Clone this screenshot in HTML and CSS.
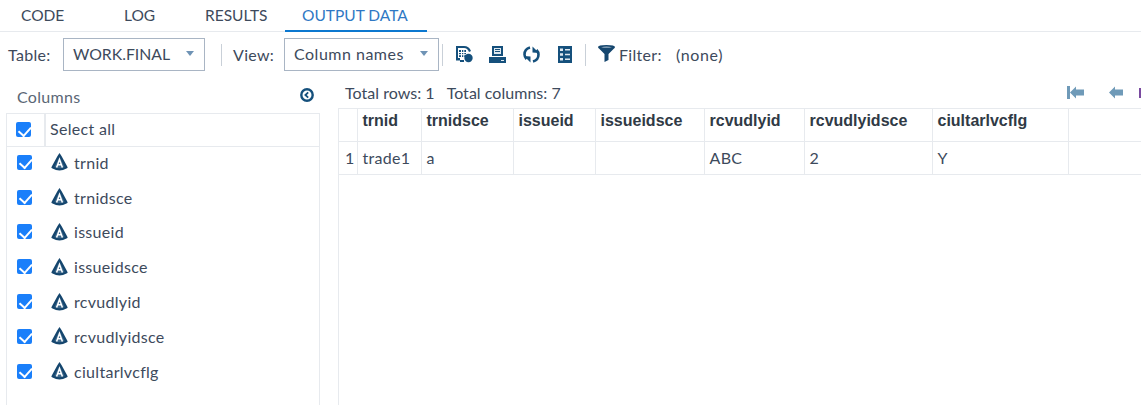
FILE: index.html
```html
<!DOCTYPE html>
<html lang="en">
<head>
<meta charset="utf-8">
<title>Output Data</title>
<link rel="stylesheet" href="styles.css">
</head>
<body>
<svg class="defs" width="0" height="0" aria-hidden="true">
  <symbol id="type-char" viewBox="0 0 17 18">
    <path fill="#15466e" d="M8.5 0 L10.5 3 L16.5 14 Q17 15 15.5 15.6 Q8.5 19.4 1.5 15.6 Q0 15 0.5 14 L6.5 3 Z"/>
    <path fill="#5f87a6" d="M8.5 4 L13.6 14 Q8.5 16.6 3.4 14 Z" opacity=".55"/>
    <path fill="none" stroke="#fff" stroke-width="1.5" d="M5.6 14.4 L8.5 6.4 L11.4 14.4 M6.6 11.8 H10.4"/>
  </symbol>
</svg>

<nav class="tabs">
  <span class="tab tab-code">CODE</span>
  <span class="tab tab-log">LOG</span>
  <span class="tab tab-results">RESULTS</span>
  <span class="tab tab-output">OUTPUT DATA</span>
</nav>

<div class="toolbar">
  <span class="lbl lbl-table">Table:</span>
  <div class="select select-table"><span>WORK.FINAL</span><i class="caret"></i></div>
  <i class="vsep sep-a"></i>
  <span class="lbl lbl-view">View:</span>
  <div class="select select-view"><span>Column names</span><i class="caret"></i></div>
  <i class="vsep sep-b"></i>
  <svg class="tool tool-a" width="18" height="17" viewBox="0 0 18 17">
    <path fill="#15507c" d="M1 0 H9 Q14 0 16 5 L14 6 Q12.5 2 9 2 H3 V12 H5 V14.5 H1 Z"/>
    <path fill="#15507c" d="M4 4 H11 V11 H4 Z"/>
    <path stroke="#fff" stroke-width="1" d="M4 6.5 H11 M4 8.7 H11 M6.5 4 V11 M8.8 4 V11"/>
    <circle fill="#15507c" cx="13.5" cy="12" r="4.2"/>
    <path fill="#15507c" d="M5 14 H9 V16 H5 Z"/>
  </svg>
  <svg class="tool tool-b" width="17" height="17" viewBox="0 0 17 17">
    <path fill="#15507c" d="M3 0 H14 V10 H3 Z"/>
    <path fill="#dfe8ef" d="M5 2 H12 V8 H5 Z"/>
    <path fill="#15507c" d="M6 3 H11 V4 H6 Z M6 5 H11 V6 H6 Z"/>
    <path fill="#15507c" d="M0 11 H17 V17 H0 Z"/>
    <path fill="#dfe8ef" d="M12 14 H15 V15 H12 Z"/>
  </svg>
  <svg class="tool tool-c" width="17" height="17" viewBox="0 0 17 17">
    <path fill="none" stroke="#15507c" stroke-width="2.6" d="M7 1.5 Q1.5 3 1.5 8.5 Q1.5 11 3.5 13"/>
    <path fill="#15507c" d="M1 10 L7.5 10.5 L7.5 16.5 Z"/>
    <path fill="none" stroke="#15507c" stroke-width="2.6" d="M10 15.5 Q15.5 14 15.5 8.5 Q15.5 6 13.5 4"/>
    <path fill="#15507c" d="M16 7 L9.5 6.5 L9.5 0.5 Z"/>
  </svg>
  <svg class="tool tool-d" width="14" height="17" viewBox="0 0 14 17">
    <path fill="#15507c" d="M0 0 H14 V17 H0 Z"/>
    <path fill="#dfe8ef" d="M2 2.5 H5 V5 H2 Z M2 7.3 H5 V9.8 H2 Z M2 12 H5 V14.5 H2 Z M7 3 H12 V4.5 H7 Z M7 7.8 H12 V9.3 H7 Z M7 12.5 H12 V14 H7 Z"/>
  </svg>
  <i class="vsep sep-c"></i>
  <svg class="tool tool-f" width="17" height="17" viewBox="0 0 17 17">
    <path fill="#15466e" d="M0 2 Q0 0 8.5 0 Q17 0 17 2 Q17 3 15.5 4 L10.5 9 V15 L6.5 17 V9 L1.5 4 Q0 3 0 2 Z"/>
    <path fill="#9db4c6" d="M3 2.2 Q8.5 0.9 14 2.2 Q8.5 3.4 3 2.2 Z"/>
  </svg>
  <span class="lbl lbl-filter">Filter:</span>
  <span class="lbl lbl-none">(none)</span>
</div>

<main class="body">
  <section class="columns">
    <header class="columns-head">
      <span>Columns</span>
      <svg class="collapse" width="14" height="14" viewBox="0 0 14 14">
        <circle cx="7" cy="7" r="5.7" fill="#fff" stroke="#15507c" stroke-width="2.4"/>
        <path d="M8.2 4.4 L5.4 7 L8.2 9.6" fill="none" stroke="#15507c" stroke-width="1.8"/>
      </svg>
    </header>
    <div class="column-list">
      <div class="select-all">
        <span class="sa-box"><i class="check"></i></span>
        <span class="sa-label">Select all</span>
      </div>
      <div class="col-row"><i class="check"></i><svg class="type"><use href="#type-char"/></svg><span>trnid</span></div>
      <div class="col-row"><i class="check"></i><svg class="type"><use href="#type-char"/></svg><span>trnidsce</span></div>
      <div class="col-row"><i class="check"></i><svg class="type"><use href="#type-char"/></svg><span>issueid</span></div>
      <div class="col-row"><i class="check"></i><svg class="type"><use href="#type-char"/></svg><span>issueidsce</span></div>
      <div class="col-row"><i class="check"></i><svg class="type"><use href="#type-char"/></svg><span>rcvudlyid</span></div>
      <div class="col-row"><i class="check"></i><svg class="type"><use href="#type-char"/></svg><span>rcvudlyidsce</span></div>
      <div class="col-row"><i class="check"></i><svg class="type"><use href="#type-char"/></svg><span>ciultarlvcflg</span></div>
    </div>
  </section>

  <section class="data">
    <div class="data-head">
      <span class="totals">Total rows: 1</span>
      <span class="totals">Total columns: 7</span>
      <span class="pager">
        <svg width="17" height="13" viewBox="0 0 17 13"><path fill="#6f9ab8" d="M0 0 H3 V13 H0 Z M3 6.5 L9 0.5 V3.5 H17 V9.5 H9 V12.5 Z"/></svg>
        <svg class="pager-prev" width="14" height="13" viewBox="0 0 14 13"><path fill="#6f9ab8" d="M0 6.5 L6 0.5 V3.5 H14 V9.5 H6 V12.5 Z"/></svg>
        <i class="pager-next"></i>
      </span>
    </div>
    <div class="grid-wrap">
      <table class="grid">
        <colgroup>
          <col class="c0"><col class="c1"><col class="c2"><col class="c3"><col class="c4"><col class="c5"><col class="c6"><col class="c7"><col class="c8">
        </colgroup>
        <thead>
          <tr><th></th><th>trnid</th><th>trnidsce</th><th>issueid</th><th>issueidsce</th><th>rcvudlyid</th><th>rcvudlyidsce</th><th>ciultarlvcflg</th><th></th></tr>
        </thead>
        <tbody>
          <tr><td class="num">1</td><td>trade1</td><td>a</td><td></td><td></td><td>ABC</td><td>2</td><td>Y</td><td></td></tr>
        </tbody>
      </table>
    </div>
  </section>
</main>
</body>
</html>
```

FILE: styles.css
```css
* { box-sizing: border-box; }
html, body { margin: 0; padding: 0; }
body {
  width: 1141px; height: 405px; overflow: hidden; background: #fff;
  font-family: "Lato", "Noto Sans", sans-serif; font-size: 16px; letter-spacing: .3px; color: #3d4a5c;
}
.defs { position: absolute; }

.tabs { display: flex; height: 32px; border-bottom: 1px solid #e7eaee; }
.tab { height: 32px; line-height: 30px; font-size: 15.5px; letter-spacing: 0; }
.tab-code { margin-left: 21px; width: 103px; }
.tab-log { width: 81px; }
.tab-results { width: 80px; }
.tab-output {
  width: 142px; padding-left: 17px; color: #2f78c4;
  border-bottom: 2px solid #0b78d0;
}

.toolbar { display: flex; align-items: center; height: 40px; padding-top: 5px; }
.lbl { line-height: 33px; }
.lbl-table { margin-left: 8px; width: 55px; }
.select {
  display: flex; align-items: center; justify-content: space-between;
  height: 33px; border: 1px solid #a9b5c4; padding: 0 10px 2px 9px; background: #fff; color: #3d4a5c;
}
.select-table { width: 142px; font-size: 15.8px; letter-spacing: 0; }
.select-view { width: 155px; letter-spacing: .5px; }
.caret { width: 0; height: 0; border: 4.5px solid transparent; border-top: 5px solid #6f93b5; border-bottom: 0; }
.vsep { width: 1px; height: 22px; background: #c9d0d8; }
.sep-a { margin-left: 16px; }
.lbl-view { margin-left: 11px; width: 51px; }
.sep-b { margin-left: 3px; }
.tool { flex: none; margin-top: -1px; }
.tool-a { margin-left: 12px; }
.tool-b { margin-left: 16px; }
.tool-c { margin-left: 17px; }
.tool-d { margin-left: 18px; }
.sep-c { margin-left: 13px; }
.tool-f { margin-left: 12px; margin-top: -3px; }
.lbl-filter { margin-left: 4px; width: 57px; }
.lbl-none { letter-spacing: .6px; }

.body { display: flex; height: 333px; }
.columns { width: 320px; flex: none; }
.columns-head {
  display: flex; align-items: center; justify-content: space-between;
  height: 41px; padding: 8px 6px 0 17px; color: #5a6675;
}
.collapse { margin-top: -4px; }
.column-list { height: 292px; margin-left: 6px; border-right: 1px solid #e7eaee; border-left: 1px solid #e7eaee; }
.select-all {
  display: flex; height: 34px; border-top: 1px solid #e7eaee; border-bottom: 1px solid #e7eaee;
}
.sa-box { width: 39px; display: flex; align-items: center; padding: 0 0 1px 9px; border-right: 2px solid #e7eaee; }
.sa-label { padding-left: 4px; line-height: 30px; }
.check {
  position: relative; display: block; flex: none; width: 15px; height: 15px; border-radius: 2px; background: #1a7ffa;
}
.check::after {
  content: ""; position: absolute; left: 5px; top: 1.5px; width: 5.5px; height: 9.5px;
  border: solid #fff; border-width: 0 2.4px 2.4px 0; transform: rotate(42deg);
}
.col-row { display: flex; align-items: center; height: 34.8px; padding: 0 0 4px 10px; }
.type { width: 17px; height: 18px; margin-left: 19px; margin-right: 6px; }

.data { flex: 1; min-width: 0; padding-left: 18px; }
.data-head { display: flex; align-items: center; height: 36px; gap: 12px; padding: 5px 0 0 7px; }
.totals { letter-spacing: .03px; }
.pager { margin-left: auto; display: flex; align-items: center; }
.pager-prev { margin-left: 25px; margin-right: 16px; }
.pager-next { display: block; width: 2px; height: 10px; background: #7a4aa0; }
.grid-wrap { height: 297px; border-left: 1px solid #e7eaee; }
.grid { border-collapse: collapse; table-layout: fixed; width: 803px; }
.grid th, .grid td { border: 1px solid #e7eaee; padding: 0 5px; text-align: left; white-space: nowrap; overflow: hidden; }
.grid th:first-child, .grid td:first-child { border-left: 0; }
.grid th:last-child, .grid td:last-child { border-right: 0; }
.grid tr { height: 33px; }
.grid th { font-family: "Liberation Sans", Arial, sans-serif; font-size: 16px; letter-spacing: 0; font-weight: 700; color: #303a45; vertical-align: top; padding-top: 3px; }
.grid td { padding-bottom: 2px; }
.grid td.num { padding: 0 0 2px 6px; }
.c0 { width: 18px; } .c1 { width: 64px; } .c2 { width: 92px; } .c3 { width: 82px; }
.c4 { width: 109px; } .c5 { width: 100px; } .c6 { width: 128px; } .c7 { width: 136px; } .c8 { width: 74px; }
```
